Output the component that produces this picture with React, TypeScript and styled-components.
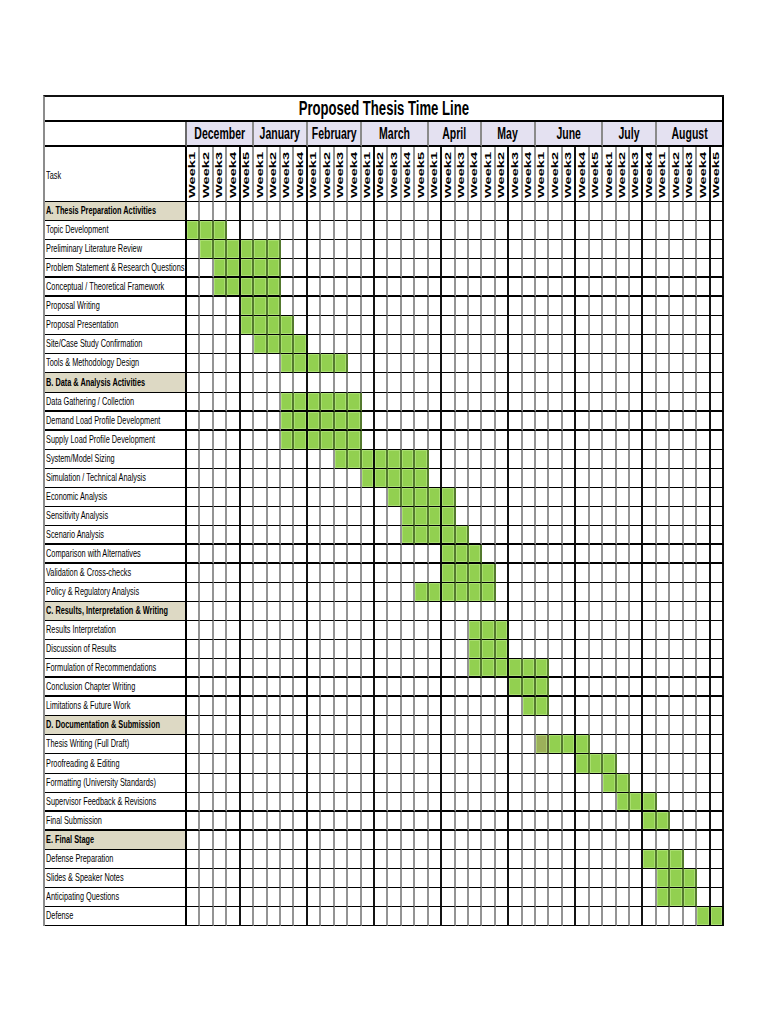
import React from "react";
import styled, { createGlobalStyle } from "styled-components";

const GlobalStyle = createGlobalStyle`
  html, body {
    margin: 0;
    padding: 0;
    background: #ffffff;
  }
  body {
    font-family: "Liberation Sans", Arial, sans-serif;
  }
`;

/* ---------- geometry ---------- */
const TASK_END = 187;
const PITCH = 13.425;
const WEEKS = 40;
const colStarts = Array.from({ length: WEEKS + 1 }, (_, i) => Math.round(TASK_END + PITCH * i));
const colWidths = colStarts.slice(1).map((s, i) => s - colStarts[i]);

const ROW_TOP = 202;
const ROW_PITCH = 19.05;

/* ---------- data ---------- */
type Month = { name: string; weeks: number };
const months: Month[] = [
  { name: "December", weeks: 5 },
  { name: "January", weeks: 4 },
  { name: "February", weeks: 4 },
  { name: "March", weeks: 5 },
  { name: "April", weeks: 4 },
  { name: "May", weeks: 4 },
  { name: "June", weeks: 5 },
  { name: "July", weeks: 4 },
  { name: "August", weeks: 5 },
];

const weekLabels: string[] = months.flatMap((m) =>
  Array.from({ length: m.weeks }, (_, i) => `Week${i + 1}`)
);

type Task = { label: string; section?: boolean; from?: number; to?: number; olive?: number[] };

const tasks: Task[] = [
  { label: "A. Thesis Preparation Activities", section: true },
  { label: "Topic Development", from: 0, to: 2 },
  { label: "Preliminary Literature Review", from: 1, to: 6 },
  { label: "Problem Statement & Research Questions", from: 2, to: 6 },
  { label: "Conceptual / Theoretical Framework", from: 2, to: 6 },
  { label: "Proposal Writing", from: 4, to: 6 },
  { label: "Proposal Presentation", from: 4, to: 7 },
  { label: "Site/Case Study Confirmation", from: 5, to: 8 },
  { label: "Tools & Methodology Design", from: 7, to: 11 },
  { label: "B. Data & Analysis Activities", section: true },
  { label: "Data Gathering / Collection", from: 7, to: 12 },
  { label: "Demand Load Profile Development", from: 7, to: 12 },
  { label: "Supply Load Profile Development", from: 7, to: 12 },
  { label: "System/Model Sizing", from: 11, to: 17 },
  { label: "Simulation / Technical Analysis", from: 13, to: 17 },
  { label: "Economic Analysis", from: 15, to: 19 },
  { label: "Sensitivity Analysis", from: 16, to: 19 },
  { label: "Scenario Analysis", from: 16, to: 20 },
  { label: "Comparison with Alternatives", from: 19, to: 21 },
  { label: "Validation & Cross-checks", from: 19, to: 22 },
  { label: "Policy & Regulatory Analysis", from: 17, to: 22 },
  { label: "C. Results, Interpretation & Writing", section: true },
  { label: "Results Interpretation", from: 21, to: 23 },
  { label: "Discussion of Results", from: 21, to: 23 },
  { label: "Formulation of Recommendations", from: 21, to: 26 },
  { label: "Conclusion Chapter Writing", from: 24, to: 26 },
  { label: "Limitations & Future Work", from: 25, to: 26 },
  { label: "D. Documentation & Submission", section: true },
  { label: "Thesis Writing (Full Draft)", from: 26, to: 29, olive: [26] },
  { label: "Proofreading & Editing", from: 29, to: 31 },
  { label: "Formatting (University Standards)", from: 31, to: 32 },
  { label: "Supervisor Feedback & Revisions", from: 32, to: 34 },
  { label: "Final Submission", from: 34, to: 35 },
  { label: "E. Final Stage", section: true },
  { label: "Defense Preparation", from: 34, to: 36 },
  { label: "Slides & Speaker Notes", from: 35, to: 37 },
  { label: "Anticipating Questions", from: 35, to: 37 },
  { label: "Defense", from: 38, to: 39 },
];

const rowStarts = Array.from({ length: tasks.length + 1 }, (_, k) => Math.round(ROW_TOP + ROW_PITCH * k));
const rowHeights = rowStarts.slice(1).map((s, k) => s - rowStarts[k]);

const gridColumns = `142px ${colWidths.map((w) => `${w}px`).join(" ")}`;
const gridRows = `25px 25px 55px ${rowHeights.map((h) => `${h}px`).join(" ")}`;

/* ---------- styled parts ---------- */
const Page = styled.div`
  box-sizing: border-box;
  width: 768px;
  min-height: 1024px;
  padding: 95px 0 0 43px;
`;

const Sheet = styled.div<{ $cols: string; $rows: string }>`
  display: grid;
  grid-template-columns: ${(p) => p.$cols};
  grid-template-rows: ${(p) => p.$rows};
  width: max-content;
  border-left: 2px solid #8c8c8c;
  border-top: 2px solid #111;
  font-family: "Liberation Sans", Arial, sans-serif;
  color: #000;
  background: #fff;

  & > * {
    box-sizing: border-box;
    min-width: 0;
  }
`;

const Squeeze = styled.span<{ $origin?: string; $scale?: number }>`
  display: inline-block;
  white-space: nowrap;
  transform: scaleX(${(p) => p.$scale ?? 0.656});
  transform-origin: ${(p) => p.$origin ?? "left center"};
`;

const TitleCell = styled.div`
  grid-column: 1 / -1;
  display: flex;
  align-items: center;
  justify-content: center;
  border-right: 2px solid #000;
  border-bottom: 2px solid #000;
  font-size: 20px;
  font-weight: 700;
  line-height: 1;
  padding-bottom: 2px;
`;

const MonthBlank = styled.div`
  border-right: 2px solid #6a6a6a;
  border-bottom: 2px solid #000;
`;

const MonthCell = styled.div<{ $span: number; $last: boolean }>`
  grid-column: span ${(p) => p.$span};
  display: flex;
  align-items: center;
  justify-content: center;
  background: #e4e1f1;
  border-right: 2px solid ${(p) => (p.$last ? "#000" : "#8a8a8a")};
  border-bottom: 2px solid #000;
  font-size: 16px;
  font-weight: 700;
  line-height: 1;
`;

const HeadTask = styled.div`
  display: flex;
  align-items: center;
  padding-left: 1px;
  padding-top: 2px;
  border-right: 2px solid #000;
  border-bottom: 1px solid #000;
  font-size: 11.4px;
`;

const WeekHead = styled.div<{ $dark: boolean }>`
  display: flex;
  align-items: flex-end;
  justify-content: center;
  padding-bottom: 3px;
  border-right: 2px solid ${(p) => (p.$dark ? "rgba(0,0,0,0.92)" : "rgba(0,0,0,0.42)")};
  border-bottom: 1px solid #000;
  overflow: visible;
`;

const WeekLabel = styled.span`
  display: inline-block;
  writing-mode: vertical-rl;
  transform: rotate(180deg) scaleX(0.6);
  font-size: 14.6px;
  font-weight: 700;
  line-height: 1;
  white-space: nowrap;
`;

const TaskCell = styled.div<{ $section: boolean; $thick: boolean }>`
  display: flex;
  align-items: center;
  padding-left: 1px;
  background: ${(p) => (p.$section ? "#ddd9c4" : "#fff")};
  border-right: 2px solid #000;
  border-bottom: ${(p) => (p.$thick ? "2px" : "1px")} solid #000;
  font-size: 11.4px;
  font-weight: ${(p) => (p.$section ? 700 : 400)};
  line-height: 1;
  overflow: visible;
`;

type Fill = "none" | "green" | "olive";
const fillColor: Record<Fill, string> = {
  none: "#ffffff",
  green: "#92d050",
  olive: "#9cb05a",
};

const GanttCell = styled.div<{ $fill: Fill; $dark: boolean; $thick: boolean }>`
  background: ${(p) => fillColor[p.$fill]};
  border-right: 2px solid ${(p) => (p.$dark ? "rgba(0,0,0,0.92)" : "rgba(0,0,0,0.42)")};
  border-bottom: ${(p) => (p.$thick ? "2px" : "1px")} solid #000;
  box-shadow: ${(p) => (p.$fill === "none" ? "none" : "inset 0 0 0 1px rgba(190, 235, 140, 0.55)")};
`;

/* ---------- component ---------- */
const isDarkLine = (col: number) => (col + 1) % 5 === 4 || col === WEEKS - 1;
const isThickRow = (k: number) => k % 7 === 3 || k % 7 === 4;

export default function App() {
  return (
    <>
      <GlobalStyle />
      <Page>
        <Sheet $cols={gridColumns} $rows={gridRows}>
          <TitleCell>
            <Squeeze $origin="center center">Proposed Thesis Time Line</Squeeze>
          </TitleCell>

          <MonthBlank />
          {months.map((m, i) => (
            <MonthCell key={m.name} $span={m.weeks} $last={i === months.length - 1}>
              <Squeeze $origin="center center">{m.name}</Squeeze>
            </MonthCell>
          ))}

          <HeadTask>
            <Squeeze $scale={0.645}>Task</Squeeze>
          </HeadTask>
          {weekLabels.map((w, i) => (
            <WeekHead key={`wh-${i}`} $dark={isDarkLine(i)}>
              <WeekLabel>{w}</WeekLabel>
            </WeekHead>
          ))}

          {tasks.map((t, k) => {
            const thick = isThickRow(k);
            return (
              <React.Fragment key={t.label}>
                <TaskCell $section={!!t.section} $thick={thick}>
                  <Squeeze $scale={0.645}>{t.label}</Squeeze>
                </TaskCell>
                {weekLabels.map((_, i) => {
                  let fill: Fill = "none";
                  if (t.from !== undefined && t.to !== undefined && i >= t.from && i <= t.to) {
                    fill = t.olive?.includes(i) ? "olive" : "green";
                  }
                  return (
                    <GanttCell
                      key={`c-${k}-${i}`}
                      $fill={fill}
                      $dark={isDarkLine(i)}
                      $thick={thick}
                    />
                  );
                })}
              </React.Fragment>
            );
          })}
        </Sheet>
      </Page>
    </>
  );
}
